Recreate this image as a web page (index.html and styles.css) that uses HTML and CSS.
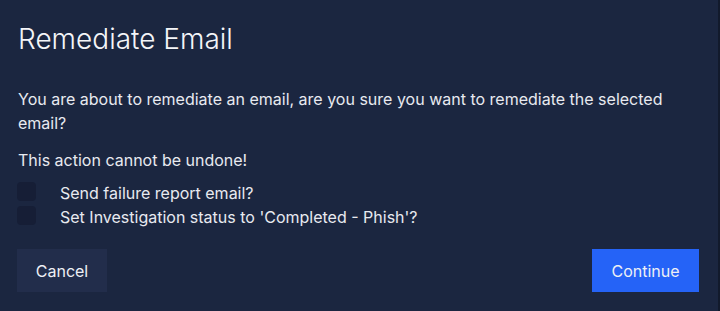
FILE: index.html
```html
<!DOCTYPE html>
<html>
<head>
<meta charset="utf-8">
<link rel="stylesheet" href="styles.css">
</head>
<body>
<div class="page">
  <div class="dialog">
    <h1 class="title">Remediate Email</h1>
    <p class="text">You are about to remediate an email, are you sure you want to remediate the selected email?</p>
    <p class="text warn">This action cannot be undone!</p>
    <div class="checks">
      <label class="check"><span class="box"></span><span class="label">Send failure report email?</span></label>
      <label class="check"><span class="box"></span><span class="label">Set Investigation status to 'Completed - Phish'?</span></label>
    </div>
    <div class="actions">
      <button class="btn btn-cancel">Cancel</button>
      <button class="btn btn-primary">Continue</button>
    </div>
  </div>
  <div class="scrollbar"></div>
</div>
</body>
</html>
```

FILE: styles.css
```css
html, body {
  margin: 0;
  padding: 0;
  width: 720px;
  height: 311px;
  overflow: hidden;
  background: #1b2640;
}
.page {
  display: flex;
  height: 311px;
}
.dialog {
  flex: 1;
  padding: 0 19px 0 18px;
  font-family: Inter, "Noto Sans", sans-serif;
  color: #e8eaf0;
}
.scrollbar {
  width: 2px;
  background: #121a2c;
}
.title {
  margin: 0;
  padding-top: 21px;
  font-size: 28px;
  line-height: 36px;
  font-weight: 300;
  color: #f4f5f8;
  letter-spacing: 0;
}
.text {
  margin: 0;
  font-size: 16px;
  line-height: 24px;
  font-weight: 400;
}
.text:first-of-type {
  margin-top: 30px;
}
.warn {
  margin-top: 13px;
}
.checks {
  margin-top: 9px;
  display: flex;
  flex-direction: column;
}
.check {
  display: flex;
  align-items: center;
  height: 24px;
  font-size: 16px;
}
.box {
  width: 19px;
  height: 19px;
  margin-left: -1px;
  border-radius: 4px;
  background: #161e36;
  margin-right: 24px;
  position: relative;
  top: -2px;
}
.actions {
  margin-top: 20px;
  display: flex;
  justify-content: space-between;
  margin-left: -1px;
}
.btn {
  border: 0;
  height: 43px;
  font-family: Inter, "Noto Sans", sans-serif;
  font-size: 16px;
  color: #eef0f5;
  padding: 0;
}
.btn-cancel {
  width: 90px;
  background: #222d4b;
}
.btn-primary {
  width: 107px;
  background: #2563f7;
}
```
